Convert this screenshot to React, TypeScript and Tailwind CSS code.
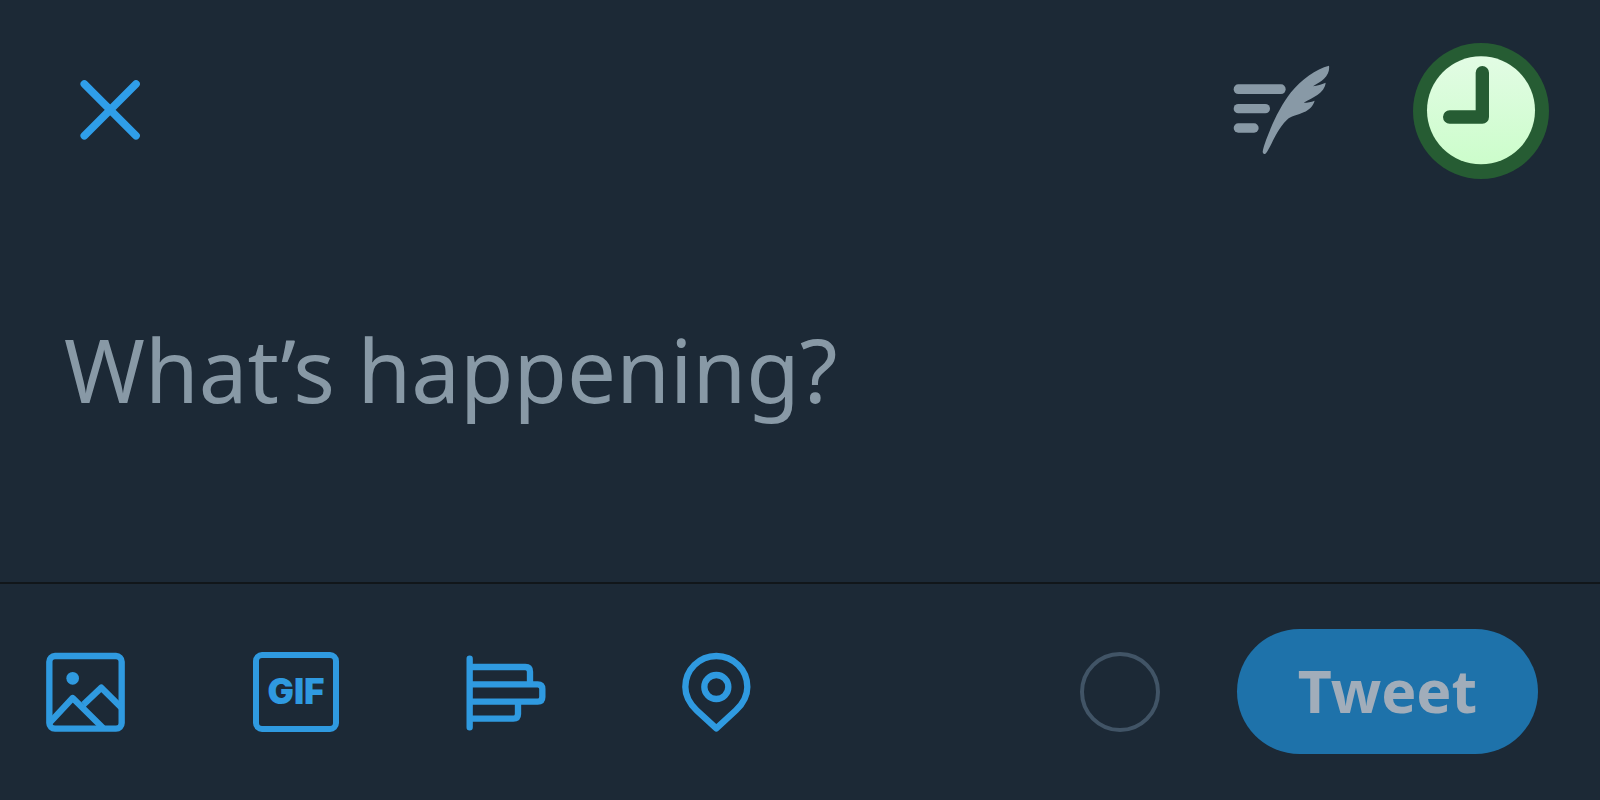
import React from 'react';

function CloseIcon() {
  return (
    <svg viewBox="61 61 180 180" className="size-15 overflow-visible" fill="none" stroke="currentColor" strokeWidth="23" strokeLinecap="round" aria-hidden="true">
      <path d="M74 70 229 225M229 70 74 225" />
    </svg>
  );
}

function DraftsIcon() {
  return (
    <svg viewBox="69 47 291 270" className="h-[90px] w-[97px] overflow-visible" fill="currentColor" aria-hidden="true">
      <rect x="71" y="102" width="156" height="29" rx="14" />
      <rect x="71" y="161" width="109" height="28" rx="14" />
      <rect x="71" y="219" width="75" height="28" rx="14" />
      <path d="M357 46C359 62 354 74 342 85C334 93 322 99 309 108C322 106 334 103 347 97C345 113 336 124 322 134C309 143 295 149 281 157C293 157 303 155 314 151C309 168 298 178 281 186C264 194 249 195 236 204C217 219 198 252 184 281C178 293 173 302 168 309C165 313 159 311 158 305C160 290 169 266 179 242C195 201 219 157 243 126C274 87 318 56 357 46Z" />
    </svg>
  );
}

function ClockIcon() {
  return (
    <svg viewBox="38 38 408 408" className="size-34" aria-hidden="true">
      <defs>
        <linearGradient id="face" x1="0" y1="0" x2="0" y2="1">
          <stop offset="0" stopColor="#e2fce4" />
          <stop offset="1" stopColor="#ccfdcb" />
        </linearGradient>
      </defs>
      <circle cx="242" cy="242" r="204" fill="#265c33" />
      <circle cx="242" cy="240" r="162" fill="url(#face)" />
      <path d="M246 127V260H148" fill="none" stroke="#265c33" strokeWidth="40" strokeLinecap="round" strokeLinejoin="round" />
    </svg>
  );
}

function ImageIcon() {
  return (
    <svg viewBox="48 36 240 240" className="size-20" fill="none" stroke="currentColor" strokeWidth="19" aria-hidden="true">
      <rect x="58" y="48" width="217" height="218" rx="17" />
      <circle cx="128" cy="115" r="19" fill="currentColor" stroke="none" />
      <path d="M60 247 128 174 219 264M161 193 214 143 273 202" strokeLinejoin="round" />
    </svg>
  );
}

function PollIcon() {
  return (
    <svg viewBox="48 36 240 240" className="size-20" fill="none" stroke="currentColor" strokeWidth="19" strokeLinecap="round" strokeLinejoin="round" aria-hidden="true">
      <path d="M59 56V262M60 81H226Q240 81 240 95V132M60 133H263Q277 133 277 147V171Q277 185 263 185H60M60 236H190Q204 236 204 222V186" />
    </svg>
  );
}

function LocationIcon() {
  return (
    <svg viewBox="9 36 261 240" className="h-20 w-[87px]" fill="none" stroke="currentColor" strokeWidth="19" strokeLinejoin="round" aria-hidden="true">
      <path d="M139 265 80 211C58 190 46 168 46 141A93 93 0 0 1 232 141C232 168 220 190 198 211Z" />
      <circle cx="139" cy="141" r="36" />
    </svg>
  );
}

export default function App() {
  return (
    <form
      onSubmit={(e) => e.preventDefault()}
      className="flex min-h-screen flex-col bg-[#1c2936] font-['Noto_Sans',sans-serif]"
    >
      <header className="flex items-center justify-between pt-[43px] pr-[51px] pl-20">
        <button type="button" aria-label="Close" className="text-[#2f9ee9]">
          <CloseIcon />
        </button>
        <div className="flex items-center gap-[83px]">
          <button type="button" aria-label="Drafts" className="text-[#8899a6]">
            <DraftsIcon />
          </button>
          <button type="button" aria-label="Schedule">
            <ClockIcon />
          </button>
        </div>
      </header>

      <main className="flex flex-1 items-center px-16 pb-6">
        <input
          type="text"
          aria-label="Tweet text"
          placeholder="What’s happening?"
          className="w-full bg-transparent text-[87px] leading-[120px] text-[#8899a6] outline-none placeholder:text-[#8899a6] placeholder:opacity-100"
        />
      </main>

      <footer className="flex items-center justify-between border-t-2 border-[#11161a] pt-[45px] pr-[62px] pb-[46px] pl-[46px]">
        <div className="flex items-center gap-[127px] text-[#2f9ae0]">
          <button type="button" aria-label="Add photo">
            <ImageIcon />
          </button>
          <button
            type="button"
            className="flex h-20 w-[86px] items-center justify-center rounded-[9px] border-[6px] border-current font-['Inter',sans-serif] text-[35px] leading-none font-black"
          >
            GIF
          </button>
          <button type="button" aria-label="Add poll">
            <PollIcon />
          </button>
          <button type="button" aria-label="Add location">
            <LocationIcon />
          </button>
        </div>
        <div className="flex items-center gap-[77px]">
          <div role="img" aria-label="Characters used" className="size-20 rounded-full border-4 border-[#415466]" />
          <button
            type="submit"
            className="flex h-[125px] w-[301px] items-center justify-center rounded-full bg-[#1e72aa] pb-0.5 text-[59px] leading-none font-bold text-[#a1adba]"
          >
            Tweet
          </button>
        </div>
      </footer>
    </form>
  );
}
